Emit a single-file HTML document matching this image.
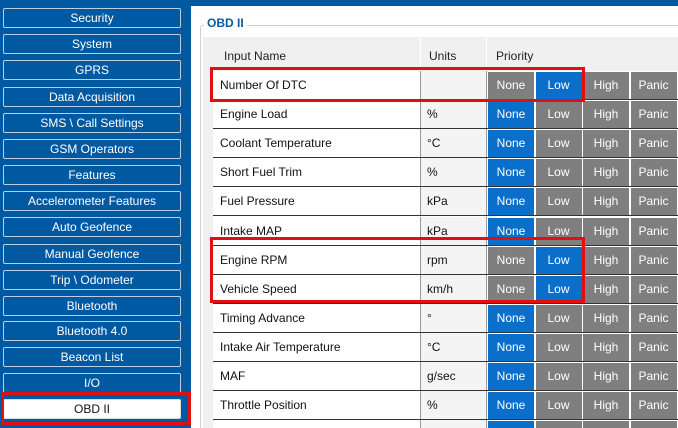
<!DOCTYPE html>
<html style="overflow:hidden;width:678px;height:428px"><head><style>
*{margin:0;padding:0;box-sizing:border-box}
body{width:678px;height:428px;overflow:hidden;background:#0159a1;font-family:"Liberation Sans",sans-serif;position:relative}
#wrap{position:absolute;left:0;top:0;width:678px;height:428px;overflow:hidden}
.nav{position:absolute;left:3px;width:178px;height:20px;border:1px solid #b8cfe6;border-radius:2px;color:#fff;font-size:12px;text-align:center;line-height:18px}
.panel{position:absolute;left:191px;top:6px;width:487px;height:422px;background:#fff}
.gb{position:absolute;left:200px;top:25px;width:478px;height:403px;border:1px solid #d0d0d0;border-right:none;border-bottom:none;border-radius:3px 0 0 0}
.lbl{position:absolute;left:204px;top:16px;background:#fff;padding:0 3px;color:#0a5aa5;font-weight:bold;font-size:12px}
.strip{position:absolute;left:203px;top:37px;width:10px;height:391px;background:#f0f0f0}
.hdr{position:absolute;left:213px;top:37px;width:465px;height:34px;background:#f0f0f0;font-size:12px;color:#222}
.row{position:absolute;left:213px;width:465px;height:29px;border-bottom:1px solid #333;font-size:12px;color:#111}
.c1{position:absolute;left:0;top:0;width:207px;height:28px;line-height:28px;padding-left:7px;background:#fff}
.c2{position:absolute;left:207px;top:0;width:67px;height:28px;line-height:28px;padding-left:6px;background:#f4f4f4;border-left:1px solid #999;border-right:1px solid #999}
.b{position:absolute;top:1px;width:46px;height:27px;line-height:27px;text-align:center;color:#fff;background:#7f7f7f}
.on{background:#0a6fcb}
.red{position:absolute;border:3px solid #e01010}
</style></head><body><div id="wrap">
<div class="nav" style="top:8px">Security</div>
<div class="nav" style="top:34px">System</div>
<div class="nav" style="top:60px">GPRS</div>
<div class="nav" style="top:87px">Data Acquisition</div>
<div class="nav" style="top:113px">SMS \ Call Settings</div>
<div class="nav" style="top:139px">GSM Operators</div>
<div class="nav" style="top:165px">Features</div>
<div class="nav" style="top:191px">Accelerometer Features</div>
<div class="nav" style="top:217px">Auto Geofence</div>
<div class="nav" style="top:244px">Manual Geofence</div>
<div class="nav" style="top:270px">Trip \ Odometer</div>
<div class="nav" style="top:296px">Bluetooth</div>
<div class="nav" style="top:321px">Bluetooth 4.0</div>
<div class="nav" style="top:347px">Beacon List</div>
<div class="nav" style="top:373px">I/O</div>
<div class="nav" style="top:399px;background:#fff;color:#111;border-color:#ddd">OBD II</div>
<div class="red" style="left:1px;top:392px;width:190px;height:33px"></div>
<div class="panel"></div>
<div class="gb"></div>
<div class="lbl">OBD II</div>
<div class="strip"></div>
<div class="hdr"><span style="position:absolute;left:11px;top:12px">Input Name</span><span style="position:absolute;left:216px;top:12px">Units</span><span style="position:absolute;left:283px;top:12px">Priority</span><div style="position:absolute;left:207px;top:0;width:1px;height:34px;background:#fff"></div><div style="position:absolute;left:273px;top:0;width:1px;height:34px;background:#fff"></div></div>
<div id="rows"></div>
<div class="red" style="left:210px;top:67px;width:375px;height:35px"></div>
<div class="red" style="left:210px;top:237px;width:375px;height:66px"></div>
</div>
<script>
var d=[["Number Of DTC","",1],["Engine Load","%",0],["Coolant Temperature","°C",0],["Short Fuel Trim","%",0],["Fuel Pressure","kPa",0],["Intake MAP","kPa",0],["Engine RPM","rpm",1],["Vehicle Speed","km/h",1],["Timing Advance","°",0],["Intake Air Temperature","°C",0],["MAF","g/sec",0],["Throttle Position","%",0],["","",0]];
var h="";
d.forEach(function(r,i){var t=71+i*29.1;
h+='<div class="row" style="top:'+t+'px"><div class="c1">'+r[0]+'</div><div class="c2">'+r[1]+'</div>';
var n=["None","Low","High","Panic"];
n.forEach(function(x,j){h+='<div class="b'+(j==r[2]?' on':'')+'" style="left:'+(275+j*47.5)+'px">'+x+'</div>';});
h+='</div>';});
document.getElementById("rows").innerHTML=h;
</script>
</body></html>
